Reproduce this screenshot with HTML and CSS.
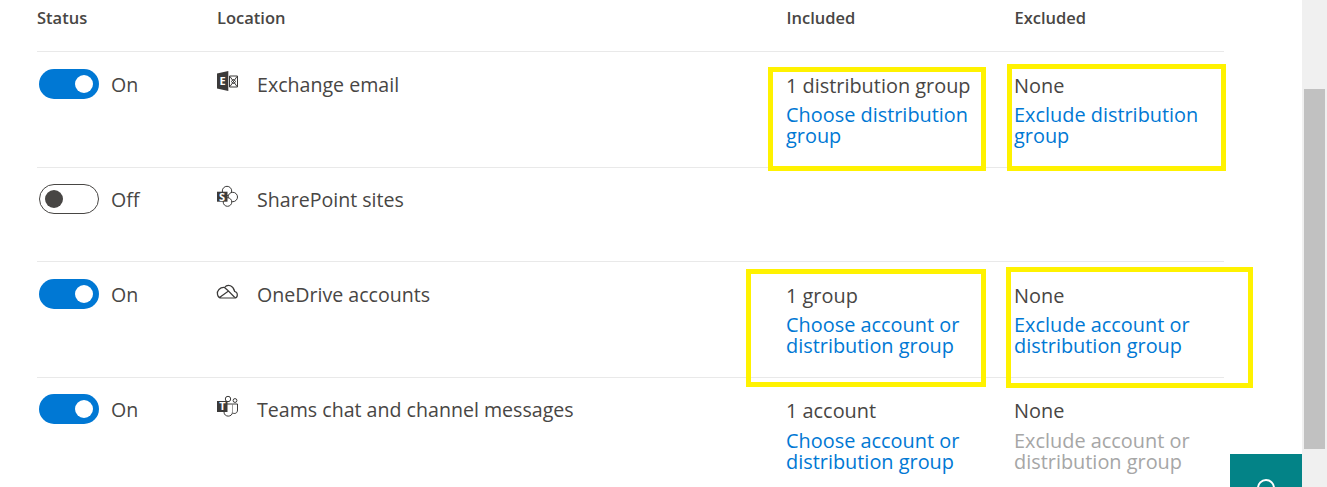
FILE: index.html
```html
<!DOCTYPE html>
<html lang="en">
<head>
<meta charset="utf-8">
<title>Locations</title>
<link rel="stylesheet" href="styles.css">
</head>
<body>
<div class="page">
  <main class="content">
    <div class="row head">
      <div>Status</div><div>Location</div><div>Included</div><div>Excluded</div>
    </div>
    <div class="row r1">
      <div class="status"><span class="toggle on"></span><span>On</span></div>
      <div class="loc">
        <svg class="icon" viewBox="0 0 21 21"><path class="solid" d="M0 2.500 11.300 0V20L0 17.500Z"/><text class="glyph" x="2.400" y="14.200">E</text><path class="thin" d="M12.500 5H20.500V16H12.500Z"/><path class="thin" d="M13 5.500 20 15.500M20 5.500 13 15.500M14.500 10.500 16.500 8 18.500 10.500 16.500 13Z"/></svg>
        <span>Exchange email</span>
      </div>
      <div class="cell"><div class="val">1 distribution group</div><a class="link">Choose distribution group</a></div>
      <div class="cell"><div class="val">None</div><a class="link">Exclude distribution group</a></div>
    </div>
    <div class="row r2">
      <div class="status"><span class="toggle off"></span><span>Off</span></div>
      <div class="loc">
        <svg class="icon" viewBox="0 0 21 21"><circle class="thin" cx="10" cy="5" r="4.700"/><circle class="thin" cx="15.800" cy="11" r="4.700"/><circle class="thin" cx="10.500" cy="16" r="4.300"/><path class="solid" d="M0 5.700H10.500V15.700H0Z"/><text class="glyph" x="2" y="14.500">S</text></svg>
        <span>SharePoint sites</span>
      </div>
      <div class="cell"></div>
      <div class="cell"></div>
    </div>
    <div class="row r3">
      <div class="status"><span class="toggle on"></span><span>On</span></div>
      <div class="loc">
        <svg class="icon" viewBox="0 0 21 21"><path class="thin wide" d="M4.500 17H17.500C21 17 21.500 11.500 17.700 10.500 16.500 5 11 2 7.500 6.500 3 6 -0.500 10 0.500 13.500 1 15.800 2.500 17 4.500 17Z"/><path class="thin wide" d="M2.500 16.500 11.500 10 17.800 16.500M7.500 6.500 11.500 10"/></svg>
        <span>OneDrive accounts</span>
      </div>
      <div class="cell"><div class="val">1 group</div><a class="link">Choose account or distribution group</a></div>
      <div class="cell"><div class="val">None</div><a class="link">Exclude account or distribution group</a></div>
    </div>
    <div class="row r4">
      <div class="status"><span class="toggle on"></span><span>On</span></div>
      <div class="loc">
        <svg class="icon" viewBox="0 0 21 21"><circle class="thin" cx="11" cy="3" r="2.700"/><circle class="thin" cx="18" cy="4.500" r="1.900"/><path class="thin" d="M8 8H15.500V16C15.500 21.500 7 21.500 7 16"/><path class="thin" d="M15.500 8H20.500V14C20.500 17.500 17.500 18 15.500 17"/><path class="solid" d="M0 5H10.500V16H0Z"/><text class="glyph" x="2.300" y="14.300">T</text></svg>
        <span>Teams chat and channel messages</span>
      </div>
      <div class="cell"><div class="val">1 account</div><a class="link">Choose account or distribution group</a></div>
      <div class="cell"><div class="val">None</div><a class="link disabled">Exclude account or distribution group</a></div>
    </div>
    <span class="mark m1"></span>
    <span class="mark m2"></span>
    <span class="mark m3"></span>
    <span class="mark m4"></span>
    <button class="help" aria-label="Help"><span class="ring"></span></button>
  </main>
  <div class="scrollbar"><div class="thumb"></div></div>
</div>
</body>
</html>
```
FILE: styles.css
```css
* { box-sizing: border-box; }
html, body { margin: 0; height: 100%; overflow: hidden; background: #fff; }
body { font-family: "Open Sans", "Noto Sans", sans-serif; color: #484644; }
.page { display: flex; width: 1327px; height: 487px; overflow: hidden; }
.content { position: relative; width: 1302px; height: 487px; padding: 0 78px 0 37px; overflow: hidden; }
.row {
  display: grid;
  grid-template-columns: 180px 569.500px 228px 1fr;
  border-bottom: 1px solid #e9e9e9;
  font-size: 19.600px;
  line-height: 21px;
}
.head { height: 52px; padding-top: 7px; font-size: 16.500px; line-height: 22px; font-weight: 600; }
.r1 { height: 116px; padding-top: 17px; }
.r2 { height: 94px; padding-top: 16px; }
.r3 { height: 116px; padding-top: 17px; }
.r4 { border-bottom: 0; padding-top: 16px; }
.r4 .val { margin-bottom: 6px; }
.status { display: flex; align-items: flex-start; gap: 12px; padding-left: 2px; }
.status span:last-child { line-height: 31px; }
.toggle { position: relative; display: block; width: 60px; height: 30px; border-radius: 15px; }
.toggle::after { content: ""; position: absolute; top: 6px; width: 18px; height: 18px; border-radius: 50%; }
.toggle.on { background: #0078d4; }
.toggle.on::after { left: 36px; background: #fff; }
.toggle.off { background: #fff; border: 1px solid #484644; }
.toggle.off::after { left: 5px; top: 5px; background: #484644; }
.loc { display: flex; align-items: flex-start; gap: 19px; }
.loc span { line-height: 32px; }
.icon { display: block; flex: none; width: 21px; height: 21px; margin-top: 2px; overflow: visible; }
.solid { fill: #3b3a39; }
.thin { fill: #fff; stroke: #3b3a39; stroke-width: 1; }
.wide { fill: none; stroke-width: 1.200; }
.glyph { font-family: "Open Sans", sans-serif; font-size: 11px; font-weight: 700; fill: #fff; }
.cell { padding-top: 4px; margin-left: -0.500px; font-size: 19.900px; }
.val { line-height: 26px; margin-bottom: 5px; }
.link { display: block; color: #0078d4; line-height: 21px; }
.link.disabled { color: #a6a6a6; }
.mark { position: absolute; border: 5px solid #fff200; }
.m1 { left: 768px; top: 67px; width: 218px; height: 104px; }
.m2 { left: 1007px; top: 64px; width: 219px; height: 107px; }
.m3 { left: 746px; top: 269px; width: 240px; height: 118px; }
.m4 { left: 1006px; top: 267px; width: 247px; height: 121px; }
.help { position: absolute; left: 1230px; top: 454px; width: 72px; height: 33px; padding: 0; border: 0; background: #038387; overflow: hidden; }
.ring { position: absolute; left: 27px; top: 25px; width: 18px; height: 18px; border: 2px solid #fff; border-radius: 50%; }
.scrollbar { flex: none; width: 25px; height: 487px; padding: 89px 2px 0; background: #f0f0f0; }
.thumb { height: 360px; background: #c1c1c1; }
```
